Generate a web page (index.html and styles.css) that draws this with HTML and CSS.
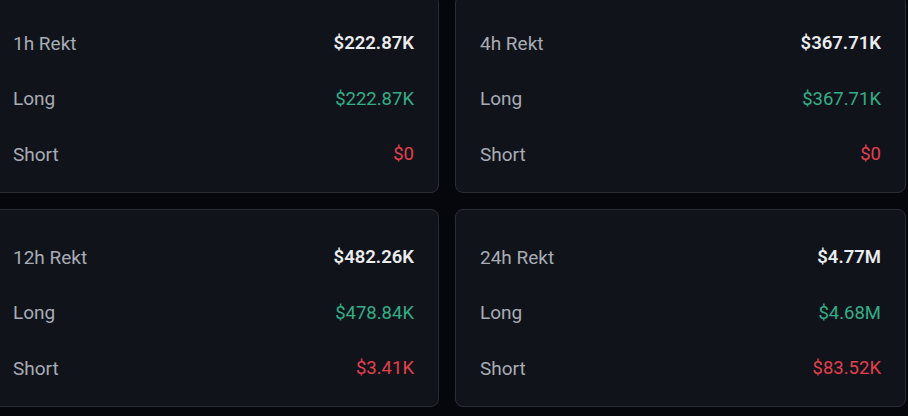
FILE: index.html
```html
<!DOCTYPE html>
<html>
<head>
<meta charset="utf-8">
<link rel="stylesheet" href="styles.css">
</head>
<body>
<div class="grid">
  <div class="card">
    <div class="row"><span class="label">1h Rekt</span><span class="val total">$222.87K</span></div>
    <div class="row"><span class="label">Long</span><span class="val long">$222.87K</span></div>
    <div class="row"><span class="label">Short</span><span class="val short">$0</span></div>
  </div>
  <div class="card">
    <div class="row"><span class="label">4h Rekt</span><span class="val total">$367.71K</span></div>
    <div class="row"><span class="label">Long</span><span class="val long">$367.71K</span></div>
    <div class="row"><span class="label">Short</span><span class="val short">$0</span></div>
  </div>
  <div class="card">
    <div class="row"><span class="label">12h Rekt</span><span class="val total">$482.26K</span></div>
    <div class="row"><span class="label">Long</span><span class="val long">$478.84K</span></div>
    <div class="row"><span class="label">Short</span><span class="val short">$3.41K</span></div>
  </div>
  <div class="card">
    <div class="row"><span class="label">24h Rekt</span><span class="val total">$4.77M</span></div>
    <div class="row"><span class="label">Long</span><span class="val long">$4.68M</span></div>
    <div class="row"><span class="label">Short</span><span class="val short">$83.52K</span></div>
  </div>
</div>
</body>
</html>
```
FILE: styles.css
```css
html, body {
  margin: 0;
  padding: 0;
  background: #05070c;
  overflow: hidden;
}
body {
  font-family: "Roboto", "Liberation Sans", sans-serif;
  width: 908px;
  height: 416px;
}
.grid {
  display: grid;
  grid-template-columns: 451px 451px;
  column-gap: 16px;
  row-gap: 16px;
  margin-left: -12px;
  margin-top: -5px;
}
.card {
  box-sizing: border-box;
  height: 198px;
  background: #11131a;
  border: 1px solid #2a2d35;
  border-radius: 8px;
  padding: 35px 24px 0 24px;
  display: flex;
  flex-direction: column;
  gap: 31.5px;
}
.row {
  display: flex;
  justify-content: space-between;
  align-items: center;
  height: 24px;
}
.label {
  color: #a7acb5;
  font-size: 19px;
}
.val {
  font-size: 18.5px;
}
.val.total {
  color: #eaecef;
  font-weight: 600;
}
.val.long {
  color: #32ae86;
}
.val.short {
  color: #e2404e;
}
```
